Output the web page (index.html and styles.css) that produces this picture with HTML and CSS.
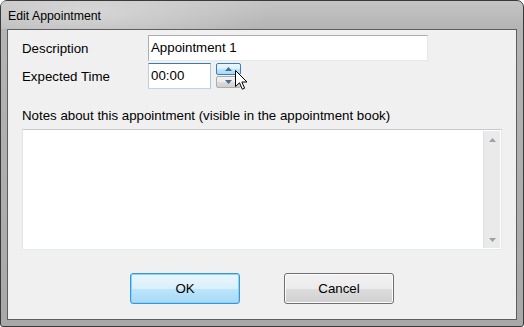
FILE: index.html
```html
<!DOCTYPE html>
<html lang="en">
<head>
    <meta charset="UTF-8">
    <title>Edit Appointment</title>
    <link rel="stylesheet" href="styles.css">
</head>
<body>
    <div class="window">
        <div class="title-bar">Edit Appointment</div>
        <div class="client">
            <div class="form-row">
                <div class="form-label">Description</div>
                <div class="text-box desc-box">Appointment 1</div>
            </div>
            <div class="form-row">
                <div class="form-label">Expected Time</div>
                <div class="text-box time-box">00:00</div>
                <div class="spinner">
                    <div class="spin-btn spin-up">
                        <svg width="7" height="4" viewBox="0 0 7 4"><path d="M0 4 L3.5 0 L7 4 Z" fill="#4d6b8c"/></svg>
                    </div>
                    <div class="spin-btn spin-down">
                        <svg width="7" height="4" viewBox="0 0 7 4"><path d="M0 0 L3.5 4 L7 0 Z" fill="#4d6b8c"/></svg>
                    </div>
                    <svg class="cursor" width="13" height="20" viewBox="0 0 13 20">
                        <path d="M0.5 0.5 L0.5 16.5 L4.5 12.8 L7.3 19.2 L9.6 18.2 L6.9 12 L12 12 Z" fill="#fff" stroke="#000" stroke-width="1"/>
                    </svg>
                </div>
            </div>
            <div class="notes-label">Notes about this appointment (visible in the appointment book)</div>
            <div class="notes-box">
                <div class="notes-text"></div>
                <div class="scrollbar">
                    <svg width="7" height="4" viewBox="0 0 7 4"><path d="M0 4 L3.5 0 L7 4 Z" fill="#a0a0a0"/></svg>
                    <svg width="7" height="4" viewBox="0 0 7 4"><path d="M0 0 L3.5 4 L7 0 Z" fill="#a0a0a0"/></svg>
                </div>
            </div>
            <div class="button-row">
                <button class="btn btn-ok" type="button">OK</button>
                <button class="btn btn-cancel" type="button">Cancel</button>
            </div>
        </div>
    </div>
</body>
</html>
```

FILE: styles.css
```css
* {
    margin: 0;
    padding: 0;
    box-sizing: border-box;
}
body {
    font: 13.3px "Liberation Sans", Arial, sans-serif;
    color: #000;
    background: #fff;
}

/***************************************************/

.window {
    width: 524px;
    height: 327px;
    border: 1px solid #3a3a3a;
    border-radius: 7px 7px 3px 3px;
    background: linear-gradient(to bottom, #c4c4c4, #b4b4b4 28px, #a8a8a8);
    padding: 0 6px 6px 6px;
    display: flex;
    flex-direction: column;
}
.title-bar {
    height: 28px;
    font-size: 12.3px;
    line-height: 30px;
    color: #000;
    background: radial-gradient(ellipse 180px 40px at 90px 10px, #d6d6d6, rgba(214,214,214,0));
    margin: 0 -6px;
    padding-left: 7px;
}
.client {
    height: 291px;
    border: 1px solid #5e5e5e;
    background: #f0f0f0;
    padding: 5px 14px 0 14px;
    display: flex;
    flex-direction: column;
}

/*********************/

.form-row {
    display: flex;
    align-items: center;
    height: 26px;
    margin-bottom: 2px;
}
.form-label {
    width: 126px;
}
.text-box {
    height: 26px;
    background: #fff;
    border: 1px solid #abadb3;
    border-color: #abadb3 #e3e9ef #e3e9ef #abadb3;
    padding: 2px 2px;
    line-height: 20px;
}
.desc-box {
    width: 280px;
}
.time-box {
    width: 63px;
    border-color: #3d7bad #a4c9e3 #b7d9ed #b5cfe7;
}
.spinner {
    position: relative;
    margin-left: 5px;
    width: 25px;
    height: 26px;
    display: flex;
    flex-direction: column;
    gap: 1px;
}
.spin-btn {
    height: 12px;
    border-radius: 2px;
    display: flex;
    align-items: center;
    justify-content: center;
}
.spin-up {
    border: 1px solid #3c7fb1;
    background: linear-gradient(to bottom, #eaf6fd, #d9f0fc 50%, #bee6fd 50%, #a7d9f5);
}
.spin-down {
    border: 1px solid #acacac;
    background: linear-gradient(to bottom, #f2f2f2, #ebebeb 50%, #dddddd 50%, #cfcfcf);
}
.cursor {
    position: absolute;
    left: 19px;
    top: 7px;
}

/*********************/

.notes-label {
    margin-top: 17px;
    line-height: 16px;
    height: 16px;
}
.notes-box {
    margin-top: 5px;
    width: 480px;
    height: 121px;
    background: #fff;
    border: 1px solid #e3e9ef;
    border-top-color: #c6c9cf;
    border-left-color: #e2e3ea;
    display: flex;
}
.notes-text {
    flex: 1;
}
.scrollbar {
    width: 17px;
    margin: 1px 1px 1px 0;
    background: #eaeaea;
    border-left: 1px solid #e0e0e0;
    display: flex;
    flex-direction: column;
    justify-content: space-between;
    align-items: center;
    padding: 7px 0 6px 0;
}

/*********************/

.button-row {
    margin-top: 23px;
    display: flex;
    justify-content: center;
    gap: 44px;
}
.btn {
    width: 110px;
    height: 31px;
    border-radius: 3px;
    font: 13.3px "Liberation Sans", Arial, sans-serif;
    color: #000;
}
.btn-ok {
    border: 1px solid #3399dd;
    box-shadow: inset 0 0 0 1px #8fd0f5;
    background: linear-gradient(to bottom, #eaf6fd, #d9f0fc 50%, #bee6fd 50%, #a7d9f5);
}
.btn-cancel {
    border: 1px solid #707070;
    box-shadow: inset 0 0 0 1px #fbfbfb;
    background: linear-gradient(to bottom, #f2f2f2, #ebebeb 50%, #dddddd 50%, #cfcfcf);
}
```
